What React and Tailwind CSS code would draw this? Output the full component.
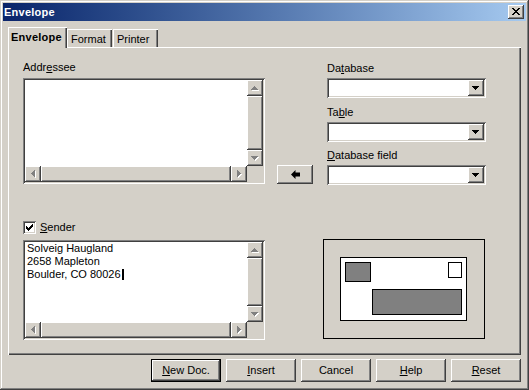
import React from "react";

const raised =
  "shadow-[inset_-1px_-1px_#404040,inset_1px_1px_#ffffff,inset_-2px_-2px_#808080,inset_2px_2px_#d4d0c8]";
const sunken =
  "shadow-[inset_1px_1px_#808080,inset_-1px_-1px_#ffffff,inset_2px_2px_#404040,inset_-2px_-2px_#d4d0c8]";

const ARROWS = {
  up: [
    [7, 6, 1, 1],
    [6, 7, 3, 1],
    [5, 8, 5, 1],
    [4, 9, 7, 1],
  ],
  down: [
    [4, 6, 7, 1],
    [5, 7, 5, 1],
    [6, 8, 3, 1],
    [7, 9, 1, 1],
  ],
  left: [
    [6, 7, 1, 1],
    [7, 6, 1, 3],
    [8, 5, 1, 5],
    [9, 4, 1, 7],
  ],
  right: [
    [6, 4, 1, 7],
    [7, 5, 1, 5],
    [8, 6, 1, 3],
    [9, 7, 1, 1],
  ],
};

function Arrow({ dir, disabled, w = 16, h = 16 }) {
  const rects = ARROWS[dir];
  return (
    <svg width={w} height={h} shapeRendering="crispEdges" className="block">
      {disabled &&
        rects.map(([x, y, rw, rh], i) => (
          <rect key={"s" + i} x={x + 1} y={y + 1} width={rw} height={rh} fill="#ffffff" />
        ))}
      {rects.map(([x, y, rw, rh], i) => (
        <rect key={i} x={x} y={y} width={rw} height={rh} fill={disabled ? "#808080" : "#000000"} />
      ))}
    </svg>
  );
}

function ScrollBtn({ dir, disabled = true }) {
  return (
    <div className={`w-[16px] h-[16px] shrink-0 bg-[#d4d0c8] ${raised}`}>
      <Arrow dir={dir} disabled={disabled} />
    </div>
  );
}

function TextArea({ heightClass, children }) {
  return (
    <div className={`w-[242px] ${heightClass} bg-white p-[2px] flex flex-col ${sunken}`}>
      <div className="flex flex-1 min-h-0">
        <div className="flex-1 min-w-0 pl-[2px] text-[11px] leading-[13px] text-black">{children}</div>
        <div className="w-[16px] flex flex-col">
          <ScrollBtn dir="up" />
          <div className={`flex-1 bg-[#d4d0c8] ${raised}`} />
          <ScrollBtn dir="down" />
        </div>
      </div>
      <div className="flex h-[16px]">
        <ScrollBtn dir="left" />
        <div className={`flex-1 bg-[#d4d0c8] ${raised}`} />
        <ScrollBtn dir="right" />
        <div className="w-[16px] bg-[#d4d0c8]" />
      </div>
    </div>
  );
}

function Combo({ className = "" }) {
  return (
    <div className={`w-[159px] h-[20px] bg-white p-[2px] flex justify-end ${sunken} ${className}`}>
      <ScrollBtn dir="down" disabled={false} />
    </div>
  );
}

function Label({ children, className = "" }) {
  return <div className={`h-[13px] text-[11px] leading-[13px] text-black whitespace-nowrap ${className}`}>{children}</div>;
}

function Btn({ children, isDefault = false }) {
  return (
    <div
      className={`w-[70px] h-[23px] bg-[#d4d0c8] flex items-center justify-center text-[11px] leading-[13px] text-black ${
        isDefault ? "border border-black" : ""
      } ${raised}`}
    >
      {children}
    </div>
  );
}

function CloseBtn() {
  const px = [
    [0, 0, 2], [6, 0, 2],
    [1, 1, 2], [5, 1, 2],
    [2, 2, 4],
    [3, 3, 2],
    [2, 4, 4],
    [1, 5, 2], [5, 5, 2],
    [0, 6, 2], [6, 6, 2],
  ];
  return (
    <div className={`w-[16px] h-[14px] bg-[#d4d0c8] ${raised}`}>
      <svg width="16" height="14" shapeRendering="crispEdges" className="block">
        {px.map(([x, y, w], i) => (
          <rect key={i} x={x + 4} y={y + 3} width={w} height={1} fill="#000" />
        ))}
      </svg>
    </div>
  );
}

function CheckBox() {
  const rows = [
    [9, 3, 1], [8, 4, 2], [3, 5, 1], [7, 5, 3], [3, 6, 2], [6, 6, 3], [3, 7, 5], [4, 8, 3], [5, 9, 1],
  ];
  return (
    <div className={`w-[13px] h-[13px] bg-white shrink-0 ${sunken}`}>
      <svg width="13" height="13" shapeRendering="crispEdges" className="block">
        {rows.map(([x, y, w], i) => (
          <rect key={i} x={x} y={y} width={w} height={1} fill="#000" />
        ))}
      </svg>
    </div>
  );
}

function Preview() {
  return (
    <svg width="162" height="100" shapeRendering="crispEdges" className="block">
      <rect x="0.5" y="0.5" width="161" height="99" fill="none" stroke="#000" />
      <rect x="17.5" y="18.5" width="126" height="63" fill="#fff" stroke="#000" />
      <rect x="22.5" y="23.5" width="25" height="19" fill="#808080" stroke="#000" />
      <rect x="125.5" y="23.5" width="13" height="15" fill="#fff" stroke="#000" />
      <rect x="49.5" y="50.5" width="89" height="25" fill="#808080" stroke="#000" />
    </svg>
  );
}

export default function App() {
  return (
    <div
      className={`w-[529px] h-[390px] bg-[#d4d0c8] px-[3px] pt-[3px] font-['Liberation_Sans',Arial,sans-serif] shadow-[inset_-1px_-1px_#404040,inset_1px_1px_#d4d0c8,inset_-2px_-2px_#808080,inset_2px_2px_#ffffff]`}
    >
      {/* Title bar */}
      <div className="h-[18px] bg-linear-to-r from-[#0a246a] to-[#a6caf0] flex items-center justify-between pl-[1px] pr-[2px]">
        <span className="text-white font-bold text-[11px] tracking-[0.25px] leading-[13px] pt-[1px]">Envelope</span>
        <CloseBtn />
      </div>

      {/* Tabs */}
      <div className="mt-[6px] ml-[5px] h-[20px] flex items-start">
        <div className="relative z-10 w-[59px] h-[21px] bg-[#d4d0c8] pl-[3px] pt-[4px] shadow-[inset_1px_1px_#ffffff,inset_-1px_0_#404040,inset_-2px_0_#808080]">
          <span className="block text-[11px] leading-[13px] font-bold tracking-[0.25px] text-black">Envelope</span>
        </div>
        <div className="mt-[2px] w-[45px] h-[18px] bg-[#d4d0c8] pl-[4px] pt-[4px] shadow-[inset_1px_1px_#ffffff,inset_-1px_0_#404040,inset_-2px_0_#808080]">
          <span className="block text-[11px] leading-[13px] text-black">Format</span>
        </div>
        <div className="mt-[2px] ml-[1px] w-[45px] h-[18px] bg-[#d4d0c8] pl-[4px] pt-[4px] shadow-[inset_1px_1px_#ffffff,inset_-1px_0_#404040,inset_-2px_0_#808080]">
          <span className="block text-[11px] leading-[13px] text-black">Printer</span>
        </div>
      </div>

      {/* Panel */}
      <div className="ml-[5px] w-[513px] h-[308px] flex items-start shadow-[inset_1px_1px_#ffffff,inset_-1px_-1px_#404040,inset_-2px_-2px_#808080]">
        {/* Left column */}
        <div className="ml-[15px] mt-[14px] w-[242px] flex flex-col">
          <Label>
            Addr<span className="underline">e</span>ssee
          </Label>
          <div className="mt-[4px]">
            <TextArea heightClass="h-[106px]" />
          </div>
          <div className="mt-[37px] h-[13px] flex items-center">
            <CheckBox />
            <Label className="ml-[4px]">
              <span className="underline">S</span>ender
            </Label>
          </div>
          <div className="mt-[6px]">
            <TextArea heightClass="h-[100px]">
              <div>Solveig Haugland</div>
              <div>2658 Mapleton</div>
              <div className="whitespace-nowrap">
                Boulder, CO 80026
                <span className="inline-block w-[2px] h-[11px] bg-black align-[-2px] ml-[1px]" />
              </div>
            </TextArea>
          </div>
        </div>

        {/* Right area */}
        <div className="ml-[12px] mt-[15px] flex flex-col">
          <div className="ml-[50px] w-[159px] flex flex-col">
            <Label>
              Da<span className="underline">t</span>abase
            </Label>
            <Combo className="mt-[3px]" />
            <Label className="mt-[8px]">
              Ta<span className="underline">b</span>le
            </Label>
            <Combo className="mt-[3px]" />
            <Label className="mt-[7px]">
              <span className="underline">D</span>atabase field
            </Label>
          </div>
          <div className="mt-[3px] flex items-start">
            <div className={`w-[36px] h-[19px] bg-[#d4d0c8] flex items-center justify-center ${raised}`}>
              <svg width="9" height="9" className="block">
                <polygon points="0,4.5 4.5,0 4.5,2.5 9,2.5 9,6.5 4.5,6.5 4.5,9" fill="#000" />
              </svg>
            </div>
            <Combo className="ml-[14px]" />
          </div>
          <div className="ml-[46px] mt-[54px]">
            <Preview />
          </div>
        </div>
      </div>

      {/* Buttons */}
      <div className="mt-[4px] pr-[5px] flex justify-end gap-[5px]">
        <Btn isDefault>
          <span>
            <span className="underline">N</span>ew Doc.
          </span>
        </Btn>
        <Btn>
          <span>
            <span className="underline">I</span>nsert
          </span>
        </Btn>
        <Btn>Cancel</Btn>
        <Btn>
          <span>
            <span className="underline">H</span>elp
          </span>
        </Btn>
        <Btn>
          <span>
            <span className="underline">R</span>eset
          </span>
        </Btn>
      </div>
    </div>
  );
}
